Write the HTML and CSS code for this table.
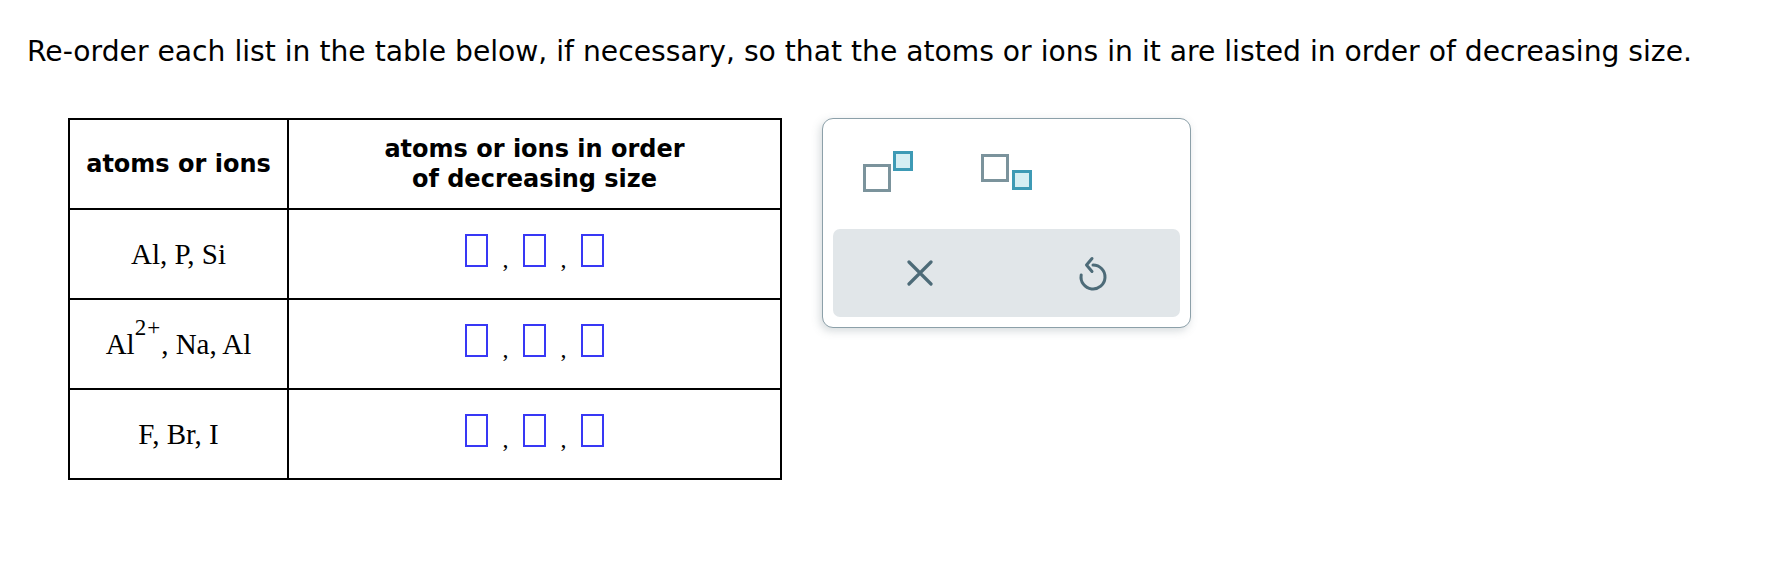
FILE: index.html
```html
<!DOCTYPE html>
<html>
<head>
<meta charset="utf-8">
<link rel="stylesheet" href="styles.css">
</head>
<body>
<div class="page">
  <p class="prompt">Re-order each list in the table below, if necessary, so that the atoms or ions in it are listed in order of decreasing size.</p>
  <div class="work">
    <table class="grid">
      <tr class="head">
        <th class="c1">atoms or ions</th>
        <th class="c2">atoms or ions in order<br>of decreasing size</th>
      </tr>
      <tr>
        <td class="c1">Al, P, Si</td>
        <td class="c2"><span class="slots"><span class="box"></span><span class="cm">,</span><span class="box"></span><span class="cm">,</span><span class="box"></span></span></td>
      </tr>
      <tr>
        <td class="c1">Al<sup>2+</sup>, Na, Al</td>
        <td class="c2"><span class="slots"><span class="box"></span><span class="cm">,</span><span class="box"></span><span class="cm">,</span><span class="box"></span></span></td>
      </tr>
      <tr>
        <td class="c1">F, Br, I</td>
        <td class="c2"><span class="slots"><span class="box"></span><span class="cm">,</span><span class="box"></span><span class="cm">,</span><span class="box"></span></span></td>
      </tr>
    </table>
    <div class="panel">
      <div class="tools">
        <button class="tool">
          <svg width="52" height="44" viewBox="0 0 52 44">
            <rect x="1.5" y="14.5" width="25" height="25" fill="#fff" stroke="#7b939c" stroke-width="3"/>
            <rect x="31.5" y="1.5" width="17" height="17" fill="#d5eef3" stroke="#3d9ab5" stroke-width="3"/>
          </svg>
        </button>
        <button class="tool sub">
          <svg width="52" height="44" viewBox="0 0 52 44">
            <rect x="1.5" y="1.5" width="25" height="25" fill="#fff" stroke="#7b939c" stroke-width="3"/>
            <rect x="32.5" y="17.5" width="17" height="17" fill="#d5eef3" stroke="#3d9ab5" stroke-width="3"/>
          </svg>
        </button>
      </div>
      <div class="actions">
        <button class="act">
          <svg width="26" height="26" viewBox="0 0 26 26">
            <path d="M2 2 L24 24 M24 2 L2 24" stroke="#4d6b78" stroke-width="3.2" stroke-linecap="round" fill="none"/>
          </svg>
        </button>
        <button class="act undo">
          <svg width="30" height="38" viewBox="0 0 30 38">
            <path d="M15 11 A 12 12 0 1 1 3.2 20.9" stroke="#4d6b78" stroke-width="3" stroke-linecap="round" fill="none"/>
            <path d="M14 4.5 L 8.5 11 L 14 17.5" stroke="#4d6b78" stroke-width="3" stroke-linecap="round" stroke-linejoin="round" fill="none"/>
          </svg>
        </button>
      </div>
    </div>
  </div>
</div>
</body>
</html>
```

FILE: styles.css
```css
html, body {
  margin: 0;
  padding: 0;
  background: #fff;
}
.page {
  padding: 0 0 0 27px;
}
.prompt {
  margin: 0;
  padding-top: 35px;
  font-family: "DejaVu Sans", Verdana, sans-serif;
  font-size: 28.2px;
  line-height: 34px;
  color: #000;
}
.work {
  display: flex;
  align-items: flex-start;
  margin-top: 49px;
  padding-left: 41px;
  gap: 40px;
}
.grid {
  border-collapse: collapse;
  border: 2px solid #000;
}
.grid th, .grid td {
  border: 2px solid #000;
  padding: 0;
  text-align: center;
  height: 88px;
}
.grid .c1 { width: 217px; }
.grid .c2 { width: 491px; }
.grid th {
  font-family: "DejaVu Sans", Verdana, sans-serif;
  font-weight: bold;
  font-size: 24px;
  line-height: 30px;
}
.grid td {
  font-family: "Liberation Serif", "Times New Roman", serif;
  font-size: 29px;
}
.grid sup {
  font-size: 23px;
  letter-spacing: 1px;
  vertical-align: 19px;
  line-height: 0;
}
.slots {
  display: inline-flex;
  align-items: flex-end;
  gap: 0;
}
.box {
  display: inline-block;
  width: 19px;
  height: 29px;
  border: 2px solid #3838f5;
}
.cm {
  font-family: "Liberation Serif", serif;
  font-size: 24px;
  width: 35px;
  text-align: center;
  line-height: 20px;
  position: relative;
  top: 2px;
}
.panel {
  width: 369px;
  height: 210px;
  box-sizing: border-box;
  border: 1.5px solid #8ca0a9;
  border-radius: 11px;
  background: #fff;
  box-shadow: -2px 3px 8px rgba(90, 110, 120, 0.25);
  padding: 10px;
  display: flex;
  flex-direction: column;
}
.tools {
  display: flex;
  height: 100px;
  align-items: flex-start;
  padding-top: 22px;
  padding-left: 30px;
  box-sizing: border-box;
  gap: 66px;
}
.tool {
  border: 0;
  background: none;
  padding: 0;
  margin: 0;
  width: 52px;
  height: 44px;
}
.tool.sub { margin-top: 3px; }
.tool svg { display: block; }
.actions {
  height: 89px;
  background: #e1e6e9;
  border-radius: 7px;
  display: flex;
  align-items: center;
  justify-content: space-around;
}
.act {
  border: 0;
  background: none;
  padding: 0;
  width: 40px;
  height: 40px;
  display: flex;
  align-items: center;
  justify-content: center;
}
.act.undo { margin-left: -2px; }
```
